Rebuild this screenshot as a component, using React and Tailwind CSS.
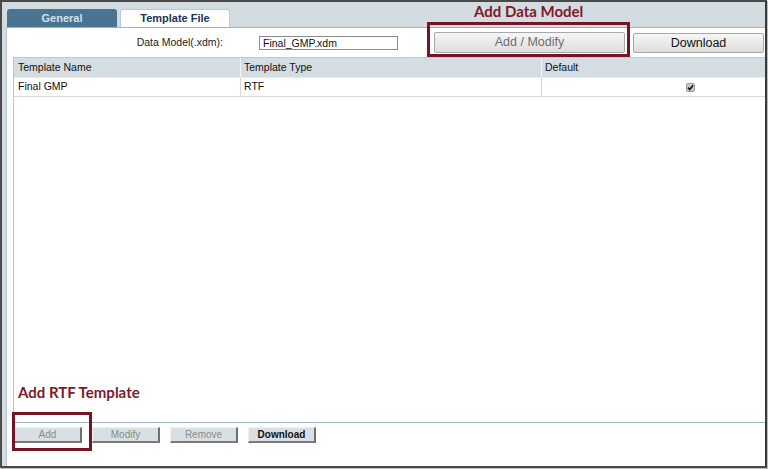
import React from "react";

const arial = { fontFamily: '"Liberation Sans", Arial, sans-serif' };
const calibri = { fontFamily: 'Lato, "Open Sans", sans-serif' };

function BottomBtn({ children, dark }) {
  return (
    <button
      className={`w-[68px] h-[16px] bg-[#d9e0e3] border-t border-l border-t-[#eef2f4] border-l-[#eef2f4] border-r-2 border-b-2 border-r-[#6f6f6f] border-b-[#7a7a7a] text-[10px] leading-none flex items-center justify-center ${dark ? "text-[#111] font-semibold" : "text-[#8a8a8a]"}`}
      style={arial}
    >
      {children}
    </button>
  );
}

export default function App() {
  return (
    <div className="w-[768px] h-[469px] bg-white relative overflow-hidden" style={arial}>
      <div className="absolute left-0 top-0 w-[767px] h-[468px] border-2 border-[#4a4a4a] border-r-[#3a3a3a] shadow-[1px_1px_0_#bdbdbd] bg-[#d3dce0] flex flex-col">
        {/* Tabs */}
        <div className="flex items-end gap-[3px] pl-[5px] pt-[7px] h-[25px]">
          <div className="w-[110px] h-[18px] bg-[#4b7392] rounded-t-[3px] flex items-center justify-center text-[11px] font-bold text-[#d5e0e8]">
            General
          </div>
          <div className="w-[110px] h-[18px] bg-white rounded-t-[3px] border border-b-0 border-[#b9c9d3] flex items-center justify-center text-[11px] font-bold text-[#1d3553]">
            Template File
          </div>
        </div>
        {/* Panel */}
        <div className="flex-1 bg-white border-t border-[#9db4c3] ml-[4px] border-l border-l-[#b5c6d0] flex flex-col">
          {/* Data model row */}
          <div className="h-[29px] flex items-center">
            <div className="w-[216px] text-right text-[10.5px] text-[#222]">Data Model(.xdm):</div>
            <div className="ml-[36px] w-[139px] h-[14px] border border-[#8c8c8c] text-[10.5px] leading-[12px] pl-[3px] text-[#111]">
              Final_GMP.xdm
            </div>
            <button className="ml-[36px] w-[191px] h-[21px] border border-[#a9a9a9] bg-gradient-to-b from-[#f6f6f6] to-[#dedede] text-[12.5px] text-[#6e6e6e] rounded-[2px]">
              Add / Modify
            </button>
            <button className="ml-[8px] w-[131px] h-[20px] border border-[#a9a9a9] bg-gradient-to-b from-[#f6f6f6] to-[#dedede] text-[12.5px] text-[#111] rounded-[2px]">
              Download
            </button>
          </div>
          {/* Table */}
          <div className="ml-[6px] flex-1 border-l border-[#b5c6d0] border-t border-t-[#b9ccd6] flex flex-col">
            <div className="h-[20px] flex bg-[#d4dde1] text-[10.5px] text-[#111] border-b border-[#e8ecee]">
              <div className="w-[227px] pl-[4px] flex items-center border-r border-[#f2f4f5]">Template Name</div>
              <div className="w-[301px] pl-[3px] flex items-center border-r border-[#f2f4f5]">Template Type</div>
              <div className="flex-1 pl-[3px] flex items-center">Default</div>
            </div>
            <div className="h-[19px] flex text-[10.5px] text-[#111] border-b border-[#ddd6cc]">
              <div className="w-[227px] pl-[4px] flex items-center border-r border-[#ddd6cc]">Final GMP</div>
              <div className="w-[301px] pl-[3px] flex items-center border-r border-[#ddd6cc]">RTF</div>
              <div className="flex-1 flex items-center pl-[144px]">
                <div className="w-[9px] h-[9px] rounded-[2px] bg-[#c9c9c9] border border-[#9a9a9a] flex items-center justify-center">
                  <svg width="7" height="7" viewBox="0 0 7 7">
                    <path d="M1 3.6 L2.8 5.5 L6 1.2" stroke="#111" strokeWidth="1.6" fill="none" />
                  </svg>
                </div>
              </div>
            </div>
            <div className="flex-1" />
          </div>
          {/* Bottom bar */}
          <div className="ml-[6px] h-[44px] border-t border-[#9fb7c5] flex gap-[10px] pt-[4px] pl-[1px]">
            <BottomBtn>Add</BottomBtn>
            <BottomBtn>Modify</BottomBtn>
            <BottomBtn>Remove</BottomBtn>
            <BottomBtn dark>Download</BottomBtn>
          </div>
        </div>
      </div>

      {/* Annotations */}
      <div className="absolute left-[474px] top-[1px] text-[15px] font-bold text-[#7b1a2a] leading-[20px]" style={calibri}>
        Add Data Model
      </div>
      <div className="absolute left-[427px] top-[22px] w-[203px] h-[35px] border-[3px] border-[#741526]" />
      <div className="absolute left-[18px] top-[382px] text-[15px] font-bold text-[#7b1a2a] leading-[20px]" style={calibri}>
        Add RTF Template
      </div>
      <div className="absolute left-[12px] top-[412px] w-[80px] h-[39px] border-[3px] border-[#741526]" />
    </div>
  );
}
